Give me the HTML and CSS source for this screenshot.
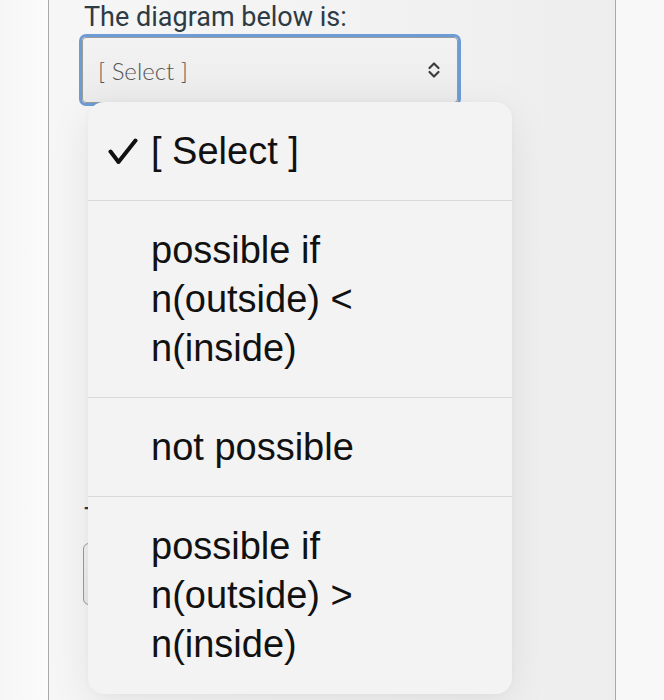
FILE: index.html
```html
<!DOCTYPE html>
<html lang="en">
<head>
<meta charset="utf-8">
<title>Quiz select</title>
<link rel="stylesheet" href="styles.css">
</head>
<body>
<div class="page">
  <div class="panel">
    <div class="question">
      <div class="label">The diagram below is:</div>
      <div class="select focused">
        <span class="select-text">[ Select ]</span>
        <svg class="chevron" width="14" height="18" viewBox="0 0 14 18"><path d="M2.5 7 L7 2.5 L11.5 7 M2.5 11 L7 15.5 L11.5 11" fill="none" stroke="#3d3d3d" stroke-width="2.2" stroke-linecap="round" stroke-linejoin="round"/></svg>
      </div>
    </div>
    <div class="diagram"></div>
    <div class="question">
      <div class="label">T</div>
      <div class="select second"></div>
    </div>
  </div>
</div>

<div class="menu">
  <div class="option selected">
    <svg class="check" width="30" height="28" viewBox="0 0 30 28"><path d="M2.5 13.5 L10.5 24 L27.5 2.5" fill="none" stroke="#111" stroke-width="4" stroke-linecap="round" stroke-linejoin="round"/></svg>
    <span>[ Select ]</span>
  </div>
  <div class="option">possible if<br>n(outside) &lt;<br>n(inside)</div>
  <div class="option">not possible</div>
  <div class="option">possible if<br>n(outside) &gt;<br>n(inside)</div>
</div>
</body>
</html>
```

FILE: styles.css
```css
html, body {
  margin: 0;
  padding: 0;
}
body {
  width: 664px;
  height: 700px;
  overflow: hidden;
  background: linear-gradient(90deg, #f6f6f6 0%, #fbfbfb 7%, #f8f8f8 100%);
  font-family: "Roboto", "Liberation Sans", sans-serif;
  position: relative;
}
.page {
  display: flex;
  height: 700px;
}
.panel {
  margin-left: 48px;
  width: 532px;
  height: 700px;
  border-left: 1.5px solid #a9a9a9;
  border-right: 1.5px solid #a9a9a9;
  background: linear-gradient(90deg, #f6f6f6 0%, #f2f2f2 60%, #ededed 100%);
  padding-left: 34px;
  box-sizing: content-box;
}
.question {
  display: flex;
  flex-direction: column;
  align-items: flex-start;
}
.label {
  font-size: 27px;
  line-height: 34px;
  color: #2d3b45;
  margin-left: 1px;
}
.select {
  box-sizing: border-box;
  width: 376px;
  height: 66px;
  margin-top: 3px;
  margin-left: -1px;
  border: 1px solid #9a9a9a;
  border-radius: 4px;
  background: linear-gradient(180deg, #f3f3f3, #ebebeb);
  display: flex;
  align-items: center;
  justify-content: space-between;
  padding: 0 16px 0 15px;
}
.select.focused {
  box-shadow: 0 0 0 3px #6c9bd6;
}
.select-text {
  font-family: "Lato", "Liberation Sans", sans-serif;
  font-weight: 300;
  font-size: 24px;
  color: #555;
}
.diagram {
  height: 398px;
}
.select.second {
  margin-top: 8px;
  margin-left: 0;
  height: 62px;
  border-radius: 6px;
}
.menu {
  position: absolute;
  left: 88px;
  top: 102px;
  width: 424px;
  height: 592px;
  background: #f3f3f3;
  border-radius: 16px;
  box-shadow: 0 10px 40px rgba(0, 0, 0, 0.08), 0 0 6px rgba(0, 0, 0, 0.03);
  overflow: hidden;
  font-family: "Liberation Sans", "Helvetica", sans-serif;
  font-size: 38px;
  line-height: 49px;
  color: #111;
}
.option {
  padding: 25px 20px 24px 63px;
  border-bottom: 1px solid #d9d9d9;
}
.option:last-child {
  border-bottom: none;
}
.option.selected {
  display: flex;
  align-items: center;
  padding-left: 20px;
}
.check {
  width: 30px;
  height: 28px;
  margin-right: 13px;
  margin-top: 1px;
}
```
